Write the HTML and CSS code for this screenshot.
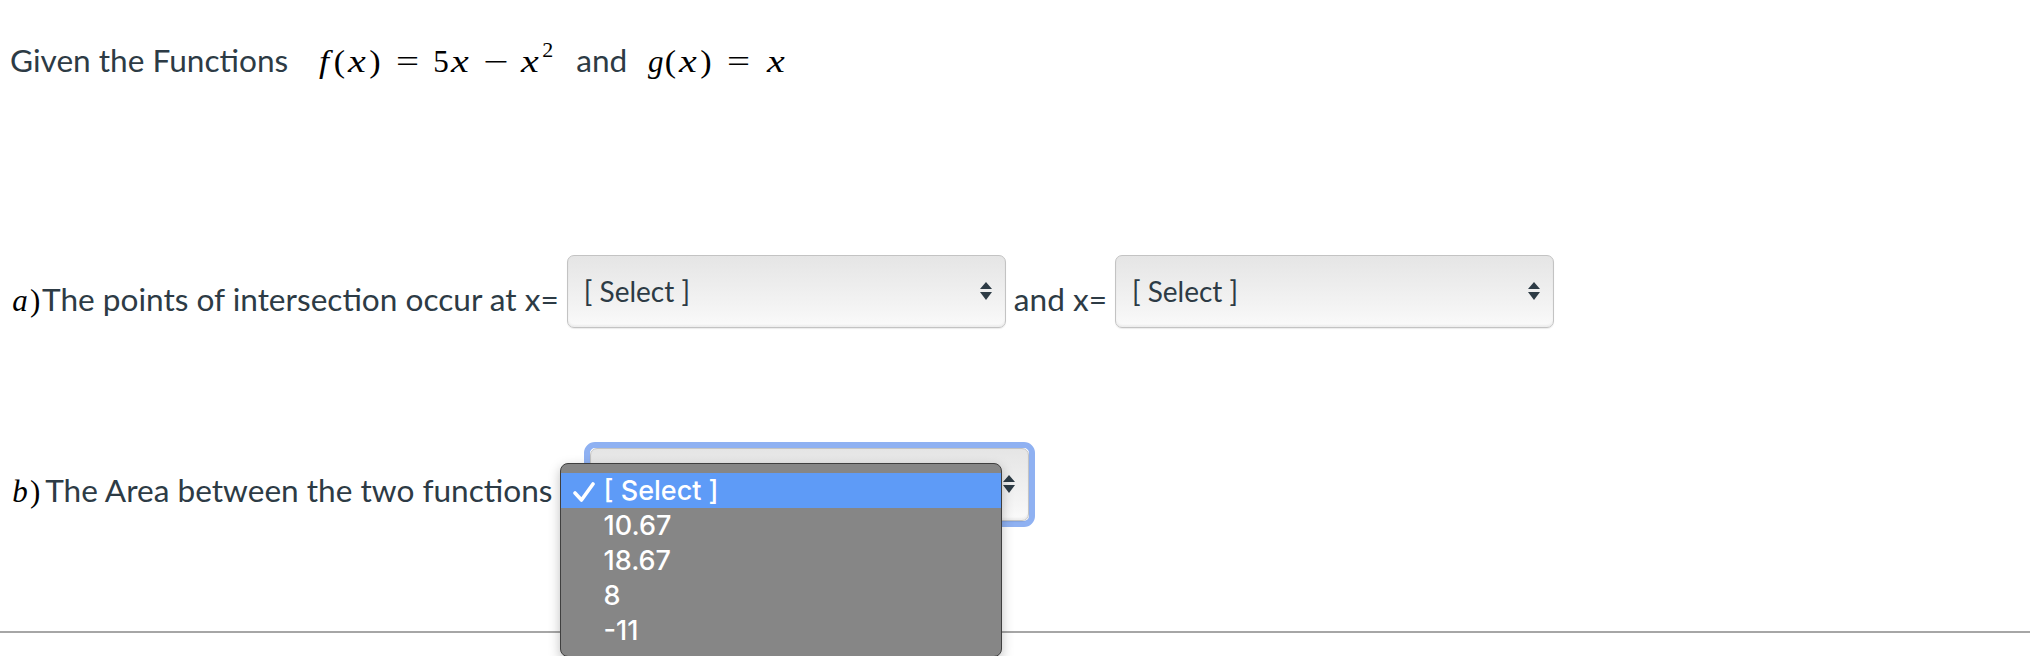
FILE: index.html
```html
<!DOCTYPE html>
<html>
<head>
<meta charset="utf-8">
<link rel="stylesheet" href="styles.css">
</head>
<body>
<div class="page">
  <div class="line line-1">
    <span class="txt">Given the Functions</span>
    <span class="math m1"><i class="g mf">f</i><span class="g mpl">(</span><i class="g mx">x</i><span class="g mpr">)</span><span class="g mrel">=</span><span class="g mn">5</span><i class="g mx">x</i><span class="g mbin">−</span><i class="g mx">x</i><sup class="g msup">2</sup></span>
    <span class="txt and">and</span>
    <span class="math m2"><i class="g mg">g</i><span class="g mpl">(</span><i class="g mx">x</i><span class="g mpr">)</span><span class="g mrel">=</span><i class="g mx">x</i></span>
  </div>

  <div class="line line-a">
    <span class="label"><span class="math lbl"><i class="g la">a</i><span class="g lp">)</span></span>The points of intersection occur at x=</span>
    <div class="select">
      <span class="sel-text">[ Select ]</span>
      <svg class="arrows" width="12" height="18" viewBox="0 0 12 18"><path d="M6 0 L12 7 L0 7 Z M0 10 L12 10 L6 18 Z" fill="#2d3b45"/></svg>
    </div>
    <span class="label">and x=</span>
    <div class="select">
      <span class="sel-text">[ Select ]</span>
      <svg class="arrows" width="12" height="18" viewBox="0 0 12 18"><path d="M6 0 L12 7 L0 7 Z M0 10 L12 10 L6 18 Z" fill="#2d3b45"/></svg>
    </div>
  </div>

  <div class="line line-b">
    <span class="label"><span class="math lbl lbl-b"><i class="g la">b</i><span class="g lp">)</span></span> The Area between the two functions</span>
    <div class="focus-wrap">
      <div class="select">
        <span class="sel-text"></span>
        <svg class="arrows" width="12" height="18" viewBox="0 0 12 18"><path d="M6 0 L12 7 L0 7 Z M0 10 L12 10 L6 18 Z" fill="#2d3b45"/></svg>
      </div>
      <div class="menu">
        <div class="opt active"><svg class="check" width="22" height="20" viewBox="0 0 22 20"><path d="M2 11 L8.5 18 L20 2" fill="none" stroke="#ffffff" stroke-width="3.6" stroke-linecap="round" stroke-linejoin="round"/></svg>[ Select ]</div>
        <div class="opt">10.67</div>
        <div class="opt">18.67</div>
        <div class="opt">8</div>
        <div class="opt">-11</div>
      </div>
    </div>
  </div>

  <div class="rule"></div>
</div>
</body>
</html>
```

FILE: styles.css
```css
html, body {
  margin: 0;
  padding: 0;
  background: #ffffff;
}
body {
  position: relative;
  width: 2030px;
  height: 656px;
  overflow: hidden;
  font-family: Lato, "Open Sans", sans-serif;
  color: #2d3b45;
  font-size: 31.6px;
}
.page {
  padding: 0 0 0 10px;
}
.math {
  font-family: "Liberation Serif", "DejaVu Serif", serif;
  color: #000;
  font-size: 31px;
  white-space: nowrap;
}
.math i {
  font-style: italic;
}
.g {
  display: inline-block;
  text-align: center;
}
.mf { width: 20px; transform: scaleX(1.15); }
.mg { width: 19px; }
.mpl { width: 11px; transform: scaleX(1.1); }
.mpr { width: 12px; transform: scaleX(1.1); }
.mx { width: 24px; transform: scaleX(1.29); }
.mn { width: 15px; }
.mrel {
  width: 23px;
  margin: 0 14px 0 15px;
  transform: scaleX(1.32);
}
.mbin {
  width: 18px;
  margin: 0 13px 0 15px;
  transform: scaleX(1.45);
}
.msup {
  width: 10px;
  font-size: 22px;
  vertical-align: 15px;
  line-height: 0;
}
.line {
  display: flex;
  white-space: nowrap;
}
.line-1 {
  align-items: baseline;
  height: 40px;
  padding-top: 41px;
}
.line-1 .m1 {
  margin-left: 26px;
}
.line-1 .and {
  margin-left: 24px;
}
.line-1 .m2 {
  margin-left: 19px;
}
.line-a {
  margin-top: 174px;
  align-items: flex-start;
}
.label {
  line-height: 38px;
  margin-top: 25px;
}
.lbl {
  margin-right: 2px;
}
.lbl-b {
  margin-right: -2px;
}
.la { width: 20px; }
.lp { width: 10px; }
.select {
  box-sizing: border-box;
  width: 439px;
  height: 73px;
  border: 1px solid #c3c3c3;
  border-radius: 7px;
  background: linear-gradient(#e5e5e5, #f3f3f3 70%, #fafafa);
  box-shadow: inset 0 -2px 2px rgba(0,0,0,0.05), 0 1px 1px rgba(0,0,0,0.08);
  display: flex;
  align-items: center;
  justify-content: space-between;
  padding: 0 13px 0 16px;
  margin: 0 8px;
  font-size: 28px;
}
.sel-text {
  margin-top: -1px;
}
.arrows {
  display: block;
  margin-top: -2px;
}
.line-b {
  margin-top: 114px;
  align-items: flex-start;
}
.line-b .label {
  margin-top: 29px;
}
.focus-wrap {
  position: relative;
  margin-left: 31px;
  border: 6px solid #8fb1f2;
  border-radius: 11px;
}
.focus-wrap .select {
  margin: 0;
  height: 73px;
}
.menu {
  position: absolute;
  z-index: 3;
  left: -30px;
  top: 15px;
  width: 442px;
  box-sizing: border-box;
  height: 194px;
  background: #868686;
  border: 1px solid #3f3f3f;
  border-radius: 8px;
  padding: 9px 0;
  box-shadow: 0 4px 12px rgba(0,0,0,0.25);
  font-family: Inter, Roboto, "Liberation Sans", sans-serif;
  font-size: 27px;
  font-weight: 500;
  color: #ffffff;
}
.opt {
  height: 35px;
  line-height: 35px;
  padding-left: 43px;
  position: relative;
}
.opt.active {
  background: #5e9bf7;
}
.check {
  position: absolute;
  left: 12px;
  top: 9px;
}
.rule {
  position: absolute;
  z-index: 1;
  left: 0;
  right: 0;
  top: 631px;
  height: 2px;
  background: #a6a6a6;
}
```
